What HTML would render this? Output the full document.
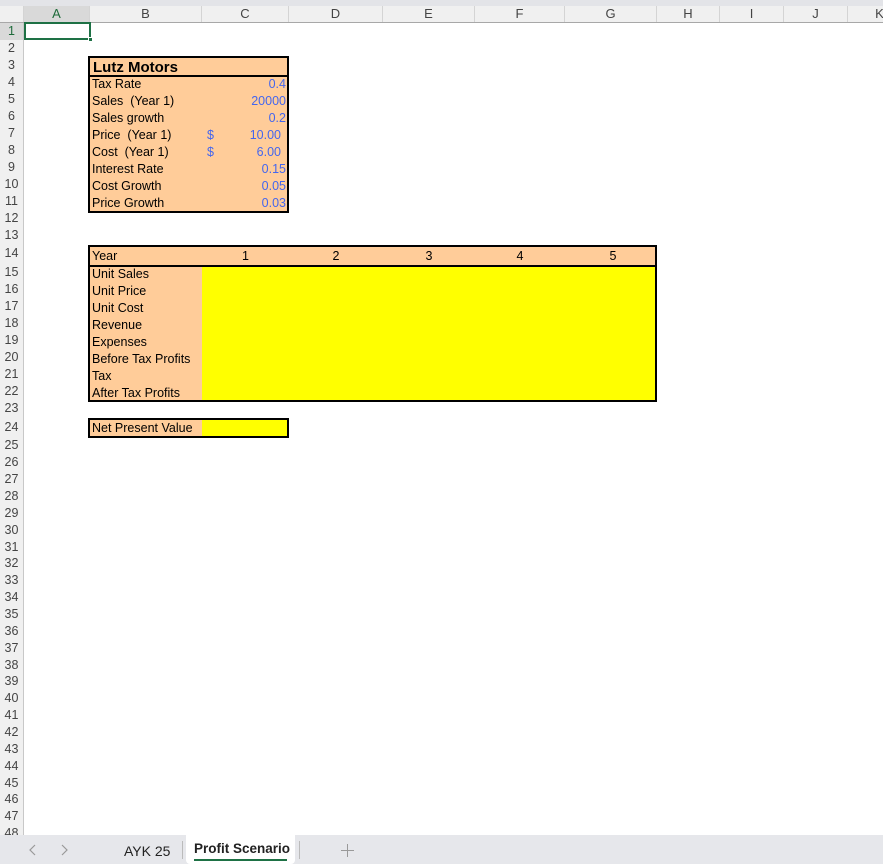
<!DOCTYPE html>
<html><head><meta charset="utf-8"><style>
*{margin:0;padding:0;box-sizing:border-box}
body{width:883px;height:864px;overflow:hidden;background:#fff;font-family:"Liberation Sans",Arial,sans-serif;position:relative}
.abs{position:absolute}
#top{left:0;top:0;width:883px;height:6px;background:#e3e4e8}
#colh{left:0;top:6px;width:883px;height:17px;background:#f0f0f0;border-bottom:1px solid #a8a8a8}
.ch{position:absolute;top:0;height:16px;line-height:16px;text-align:center;font-size:13px;color:#444;border-right:1px solid #d4d4d4}
#rowh{left:0;top:23px;width:24px;height:812px;background:#f0f0f0;border-right:1px solid #c8c8c8;overflow:hidden}
.rn{position:absolute;left:0;width:23px;text-align:center;font-size:12.5px;color:#444}
.box{position:absolute;border:2px solid #000;background:#ffcc99;font-size:12.5px;color:#000}
.r{position:absolute;left:2px;height:17px;line-height:17px;white-space:nowrap}
.b{color:#4466ee}
#tabs{left:0;top:835px;width:883px;height:29px;background:#e6e7eb}
</style></head><body>
<div id="top" class="abs"></div>
<div id="colh" class="abs">
<div class="ch" style="left:0;width:24px"></div>
<div class="ch" style="left:24px;width:66px;background:#d9d9d9;color:#1e6b3a">A</div>
<div class="ch" style="left:90px;width:112px">B</div>
<div class="ch" style="left:202px;width:87px">C</div>
<div class="ch" style="left:289px;width:94px">D</div>
<div class="ch" style="left:383px;width:92px">E</div>
<div class="ch" style="left:475px;width:90px">F</div>
<div class="ch" style="left:565px;width:92px">G</div>
<div class="ch" style="left:657px;width:63px">H</div>
<div class="ch" style="left:720px;width:64px">I</div>
<div class="ch" style="left:784px;width:64px">J</div>
<div class="ch" style="left:848px;width:64px">K</div>
</div>
<div id="rowh" class="abs">
<div class="rn" style="top:0;height:17px;background:#d9d9d9;color:#1e6b3a;line-height:17px">1</div>
<div class="rn" style="top:17px;line-height:17px">2</div>
<div class="rn" style="top:34px;line-height:17px">3</div>
<div class="rn" style="top:51px;line-height:17px">4</div>
<div class="rn" style="top:68px;line-height:17px">5</div>
<div class="rn" style="top:85px;line-height:17px">6</div>
<div class="rn" style="top:102px;line-height:17px">7</div>
<div class="rn" style="top:119px;line-height:17px">8</div>
<div class="rn" style="top:136px;line-height:17px">9</div>
<div class="rn" style="top:153px;line-height:17px">10</div>
<div class="rn" style="top:170px;line-height:17px">11</div>
<div class="rn" style="top:187px;line-height:17px">12</div>
<div class="rn" style="top:204px;line-height:17px">13</div>
<div class="rn" style="top:222px;line-height:17px">14</div>
<div class="rn" style="top:241px;line-height:17px">15</div>
<div class="rn" style="top:258px;line-height:17px">16</div>
<div class="rn" style="top:275px;line-height:17px">17</div>
<div class="rn" style="top:292px;line-height:17px">18</div>
<div class="rn" style="top:309px;line-height:17px">19</div>
<div class="rn" style="top:326px;line-height:17px">20</div>
<div class="rn" style="top:343px;line-height:17px">21</div>
<div class="rn" style="top:360px;line-height:17px">22</div>
<div class="rn" style="top:377px;line-height:17px">23</div>
<div class="rn" style="top:396px;line-height:17px">24</div>
<div class="rn" style="top:414px;line-height:17px">25</div>
<div class="rn" style="top:431px;line-height:17px">26</div>
<div class="rn" style="top:448px;line-height:17px">27</div>
<div class="rn" style="top:465px;line-height:17px">28</div>
<div class="rn" style="top:482px;line-height:17px">29</div>
<div class="rn" style="top:499px;line-height:17px">30</div>
<div class="rn" style="top:516px;line-height:17px">31</div>
<div class="rn" style="top:532px;line-height:17px">32</div>
<div class="rn" style="top:549px;line-height:17px">33</div>
<div class="rn" style="top:566px;line-height:17px">34</div>
<div class="rn" style="top:583px;line-height:17px">35</div>
<div class="rn" style="top:600px;line-height:17px">36</div>
<div class="rn" style="top:617px;line-height:17px">37</div>
<div class="rn" style="top:634px;line-height:17px">38</div>
<div class="rn" style="top:650px;line-height:17px">39</div>
<div class="rn" style="top:667px;line-height:17px">40</div>
<div class="rn" style="top:684px;line-height:17px">41</div>
<div class="rn" style="top:701px;line-height:17px">42</div>
<div class="rn" style="top:718px;line-height:17px">43</div>
<div class="rn" style="top:735px;line-height:17px">44</div>
<div class="rn" style="top:752px;line-height:17px">45</div>
<div class="rn" style="top:768px;line-height:17px">46</div>
<div class="rn" style="top:785px;line-height:17px">47</div>
<div class="rn" style="top:802px;line-height:17px">48</div>
</div>
<div class="abs" style="left:24px;top:22px;width:67px;height:18px;border:2px solid #1e7145"></div>
<div class="abs" style="left:88px;top:37px;width:5px;height:5px;background:#1e7145;border:1px solid #fff"></div>

<div class="box" style="left:88px;top:56px;width:201px;height:157px">
<div class="abs" style="left:0;top:0;width:197px;height:19px;border-bottom:2px solid #000"></div>
<div class="r" style="top:0;left:3px;font-weight:bold;font-size:15px;line-height:19px">Lutz Motors</div>
<div class="r" style="top:18px">Tax Rate</div><div class="r b" style="top:18px;left:auto;right:1px">0.4</div>
<div class="r" style="top:35px">Sales &nbsp;(Year 1)</div><div class="r b" style="top:35px;left:auto;right:1px">20000</div>
<div class="r" style="top:52px">Sales growth</div><div class="r b" style="top:52px;left:auto;right:1px">0.2</div>
<div class="r" style="top:69px">Price &nbsp;(Year 1)</div><div class="r b" style="top:69px;left:117px">$</div><div class="r b" style="top:69px;left:auto;right:6px">10.00</div>
<div class="r" style="top:86px">Cost &nbsp;(Year 1)</div><div class="r b" style="top:86px;left:117px">$</div><div class="r b" style="top:86px;left:auto;right:6px">6.00</div>
<div class="r" style="top:103px">Interest Rate</div><div class="r b" style="top:103px;left:auto;right:1px">0.15</div>
<div class="r" style="top:120px">Cost Growth</div><div class="r b" style="top:120px;left:auto;right:1px">0.05</div>
<div class="r" style="top:137px">Price Growth</div><div class="r b" style="top:137px;left:auto;right:1px">0.03</div>
</div>

<div class="box" style="left:88px;top:245px;width:569px;height:157px">
<div class="abs" style="left:0;top:0;width:565px;height:20px;border-bottom:2px solid #000"></div>
<div class="abs" style="left:112px;top:20px;width:453px;height:133px;background:#ffff00"></div>
<div class="r" style="top:1px">Year</div>
<div class="r" style="top:1px;left:112px;width:87px;text-align:center">1</div>
<div class="r" style="top:1px;left:199px;width:94px;text-align:center">2</div>
<div class="r" style="top:1px;left:293px;width:92px;text-align:center">3</div>
<div class="r" style="top:1px;left:385px;width:90px;text-align:center">4</div>
<div class="r" style="top:1px;left:477px;width:92px;text-align:center">5</div>
<div class="r" style="top:19px">Unit Sales</div>
<div class="r" style="top:36px">Unit Price</div>
<div class="r" style="top:53px">Unit Cost</div>
<div class="r" style="top:70px">Revenue</div>
<div class="r" style="top:87px">Expenses</div>
<div class="r" style="top:104px">Before Tax Profits</div>
<div class="r" style="top:121px">Tax</div>
<div class="r" style="top:138px">After Tax Profits</div>
</div>

<div class="box" style="left:88px;top:418px;width:201px;height:20px">
<div class="abs" style="left:112px;top:0;width:85px;height:16px;background:#ffff00"></div>
<div class="r" style="top:0;height:16px;line-height:16px">Net Present Value</div>
</div>

<div id="tabs" class="abs">
<svg class="abs" style="left:28px;top:9px" width="10" height="12"><path d="M7 1 L2 6 L7 11" fill="none" stroke="#999" stroke-width="1.2"/></svg>
<svg class="abs" style="left:59px;top:9px" width="10" height="12"><path d="M3 1 L8 6 L3 11" fill="none" stroke="#999" stroke-width="1.2"/></svg>
<div class="abs" style="left:124px;top:8px;font-size:14px;color:#222">AYK 25</div>
<div class="abs" style="left:182px;top:6px;width:1px;height:18px;background:#bbb"></div>
<div class="abs" style="left:186px;top:0;width:109px;height:29px;background:#fff;border-radius:0 0 4px 4px"></div>
<div class="abs" style="left:194px;top:6px;font-size:13.5px;font-weight:bold;color:#222">Profit Scenario</div>
<div class="abs" style="left:194px;top:24px;width:93px;height:2px;background:#1e7145"></div>
<div class="abs" style="left:299px;top:6px;width:1px;height:18px;background:#bbb"></div>
<svg class="abs" style="left:341px;top:9px" width="13" height="13"><path d="M6.5 0 V13 M0 6.5 H13" stroke="#999" stroke-width="1"/></svg>
</div>
</body></html>
